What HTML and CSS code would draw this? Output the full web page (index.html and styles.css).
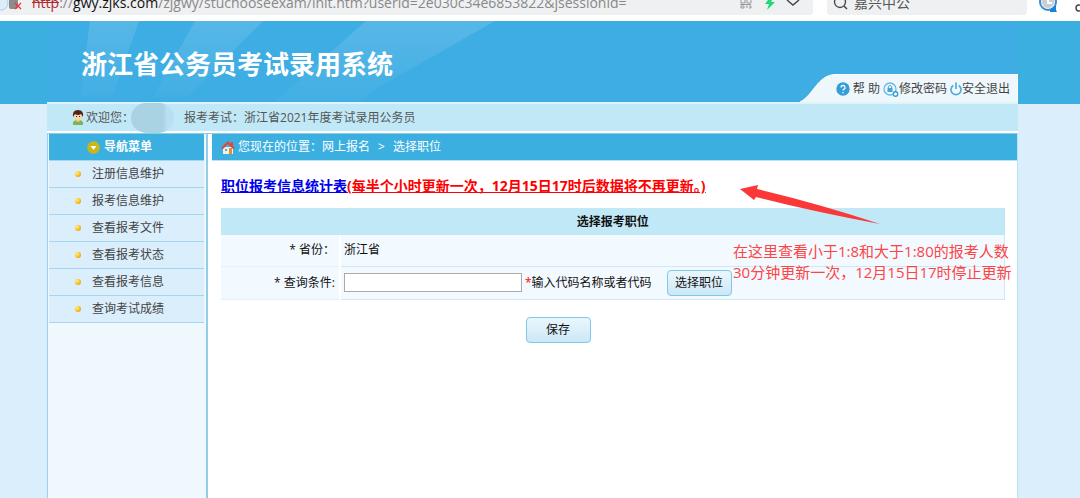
FILE: index.html
```
<!DOCTYPE html>
<html lang="zh-CN">
<head>
    <meta charset="UTF-8">
    <meta name="viewport" content="width=device-width, initial-scale=1.0">
    <title>浙江省公务员考试录用系统</title>
    <link rel="stylesheet" href="styles.css">
</head>
<body>
    <div class="browser-bar">
        <div class="address">
            <svg class="site-icon" width="24" height="24" viewBox="0 0 24 24">
                <circle cx="1" cy="12" r="7" fill="#dcecf8" stroke="#a9cdea"/>
                <rect x="9" y="8" width="9" height="10" rx="2" fill="#8b8b8b"/>
                <path d="M15 12l6 6M21 12l-6 6" stroke="#f0303c" stroke-width="1.3"/>
            </svg>
            <div class="url"><span class="scheme">http</span>://<span class="domain">gwy.zjks.com</span>/zjgwy/stuchooseexam/init.htm?userid=2e030c34e6853822&amp;jsessionid=</div>
            <svg class="address-icons" width="64" height="24" viewBox="0 0 64 24">
                <path d="M1 9v3h4V9M7 9v3h4V9M0 13.5h11M1 15h3v2H1zM6 15h1v2M9 15h2v2H9" fill="none" stroke="#999"/>
                <path d="M31 5l-6 8h4l-2 6 8-8h-4l3-6z" fill="#1fd873"/>
                <path d="M47 9l6 5 6-5" fill="none" stroke="#444" stroke-width="1.4"/>
            </svg>
        </div>
        <div class="search">
            <svg width="18" height="24" viewBox="0 0 18 24">
                <circle cx="8" cy="11" r="5.5" fill="none" stroke="#444" stroke-width="1.3"/>
                <path d="M12 15l3 3" stroke="#444" stroke-width="1.5"/>
            </svg>
            <input type="text" class="search-input" aria-label="搜索" value="嘉兴中公">
        </div>
        <svg class="bar-tools" width="42" height="24" viewBox="0 0 42 24">
            <circle cx="10" cy="11" r="8" fill="#eef3f7" stroke="#3f8bd3" stroke-width="2"/>
            <circle cx="10" cy="11" r="6" fill="#c9ced2"/>
            <path d="M10 7v5h4" fill="none" stroke="#fff" stroke-width="2"/>
            <path d="M12 18q4-1 6-4v5l1 2h-7z" fill="#1683dd"/>
            <circle cx="41" cy="17" r="3" fill="none" stroke="#444" stroke-width="1.4"/>
        </svg>
    </div>

    <header class="banner">
        <div class="banner-inner">
            <svg class="rays" width="450" height="82" viewBox="0 0 450 82">
                <defs>
                    <linearGradient id="ray" x1="0" y1="0" x2="0" y2="1">
                        <stop offset="0" stop-color="#fff" stop-opacity="0.13"/>
                        <stop offset="1" stop-color="#fff" stop-opacity="0.02"/>
                    </linearGradient>
                </defs>
                <path d="M43 0h49L65 76H33z" fill="url(#ray)"/>
                <path d="M148 0h68l-76 76h-34z" fill="url(#ray)"/>
                <path d="M319 0h129L332 66 312 82H226z" fill="url(#ray)"/>
            </svg>
            <h1>浙江省公务员考试录用系统</h1>
            <div class="tools">
                <svg class="tools-curve" width="36" height="28" viewBox="0 0 36 28">
                    <path d="M0 28C14 21 17 1 36 0v28z" fill="#eef7fc"/>
                    <path d="M0 28C14 21 17 1 36 .5" fill="none" stroke="#fff"/>
                </svg>
                <div class="tools-links">
                    <a href="#">
                        <svg width="14" height="14" viewBox="0 0 14 14">
                            <circle cx="7" cy="7" r="6.7" fill="#359fd5"/>
                            <path d="M5 5.5a2 2 0 1 1 2.8 1.8Q7 7.8 7 8.6M7 10v1.2" fill="none" stroke="#fff" stroke-width="1.3"/>
                        </svg>
                        <span>帮 助</span>
                    </a>
                    <a href="#">
                        <svg width="16" height="16" viewBox="0 0 16 16">
                            <circle cx="7" cy="8" r="6" fill="#e9f6fc" stroke="#6ab9df" stroke-width="1.3"/>
                            <path d="M5.3 7V5.5q1.7-2 3.4 0V7" fill="none" stroke="#46a5d6"/>
                            <rect x="4.5" y="7" width="5" height="4" fill="#46a5d6"/>
                            <circle cx="12.5" cy="13" r="2.2" fill="#fff" stroke="#359fd5" stroke-width="1.4"/>
                        </svg>
                        <span>修改密码</span>
                    </a>
                    <a href="#">
                        <svg width="12" height="14" viewBox="0 0 12 14">
                            <path d="M3.2 3.5a5 5 0 1 0 5.6 0M6 .5V7" fill="none" stroke="#52add9" stroke-width="1.7"/>
                        </svg>
                        <span>安全退出</span>
                    </a>
                </div>
            </div>
        </div>
    </header>

    <div class="page">
        <div class="welcome">
            <svg width="12" height="15" viewBox="0 0 12 15">
                <path d="M1 15q-1-5 5-5t5 5z" fill="#79b850"/>
                <path d="M4 9h4v2l-2 1-2-1z" fill="#f3c08e"/>
                <circle cx="6" cy="6" r="4" fill="#fbd3a8"/>
                <path d="M1 7Q0 0 6 0t5 7L9 4Q6 6 3 4z" fill="#4e2417"/>
                <path d="M4 6.5h1M7 6.5h1" stroke="#4e2417"/>
            </svg>
            <span>欢迎您：</span>
            <span class="user-mask"></span>
            <span>报考考试：浙江省2021年度考试录用公务员</span>
        </div>

        <div class="columns">
            <nav class="sidebar">
                <h2>
                    <svg width="13" height="13" viewBox="0 0 13 13">
                        <circle cx="6.5" cy="6.5" r="6.3" fill="#c9b719"/>
                        <path d="M3.5 5h6l-3 4z" fill="#fff"/>
                    </svg>
                    导航菜单
                </h2>
                <ul>
                    <li><a href="#">注册信息维护</a></li>
                    <li><a href="#">报考信息维护</a></li>
                    <li><a href="#">查看报考文件</a></li>
                    <li><a href="#">查看报考状态</a></li>
                    <li><a href="#">查看报考信息</a></li>
                    <li><a href="#">查询考试成绩</a></li>
                </ul>
            </nav>

            <main class="content">
                <div class="location">
                    <svg width="14" height="13" viewBox="0 0 14 13">
                        <path d="M2 6h10v7H2z" fill="#f6eee2"/>
                        <path d="M10 1h2v4h-2z" fill="#d9493c"/>
                        <path d="M0 7l7-7 7 7-2 1-5-5-5 5z" fill="#e2453b"/>
                        <path d="M8 7h3v6H8z" fill="#df922b"/>
                        <path d="M4 8h2v2H4z" fill="#5da5d8"/>
                    </svg>
                    <span>您现在的位置：网上报名</span>
                    <span>&gt;</span>
                    <span>选择职位</span>
                </div>

                <div class="panel">
                    <p class="notice"><a href="#">职位报考信息统计表<span>(每半个小时更新一次，12月15日17时后数据将不再更新。)</span></a></p>

                    <form>
                        <table class="form-table">
                            <thead>
                                <tr><th colspan="2">选择报考职位</th></tr>
                            </thead>
                            <tbody>
                                <tr>
                                    <td class="label">* 省份：</td>
                                    <td>浙江省</td>
                                </tr>
                                <tr>
                                    <td class="label"><label for="keyword">* 查询条件:</label></td>
                                    <td>
                                        <div class="query">
                                            <input type="text" id="keyword" class="keyword">
                                            <span class="hint"><span class="star">*</span>输入代码名称或者代码</span>
                                            <button type="button" class="btn">选择职位</button>
                                        </div>
                                    </td>
                                </tr>
                            </tbody>
                        </table>
                        <div class="actions">
                            <button type="button" class="btn">保存</button>
                        </div>
                    </form>
                </div>

                <svg class="arrow" width="142" height="44" viewBox="0 0 142 44">
                    <path d="M0 8L18 4l-1 4Q80 23 140 43 70 30 16 16l-2 3z" fill="#fb3838"/>
                </svg>
                <p class="remark">在这里查看小于1:8和大于1:80的报考人数<br>30分钟更新一次，12月15日17时停止更新</p>
            </main>
        </div>
    </div>
</body>
</html>
```
FILE: styles.css
```
* {
    box-sizing: border-box;
}

body {
    margin: 0;
    min-height: 100vh;
    display: flex;
    flex-direction: column;
    font-family: "Open Sans", "Noto Sans CJK SC", sans-serif;
    font-size: 12px;
    line-height: 18px;
    color: #222;
    background: #dbeefc;
}

h1, h2, p, ul {
    margin: 0;
    padding: 0;
}

a {
    color: inherit;
    text-decoration: none;
}

svg {
    flex: none;
}

/* browser toolbar */
.browser-bar {
    display: flex;
    height: 21px;
    padding-bottom: 6px;
    background: #fff;
}

.address, .search {
    display: flex;
    align-items: flex-end;
    background: #eff0f2;
    line-height: 24px;
    height: 15px;
}

.address {
    flex: 1;
    border-radius: 0 0 4px 0;
}

.url {
    flex: 1;
    margin-left: 8px;
    font-size: 14px;
    color: #888;
    white-space: nowrap;
}

.scheme {
    color: #b02a2a;
    text-decoration: line-through;
}

.domain {
    color: #111;
}

.address-icons {
    margin-right: 9px;
}

.search {
    width: 200px;
    margin-left: 14px;
    padding-left: 5px;
    border-radius: 0 0 4px 4px;
}

.search-input {
    flex: 1;
    min-width: 0;
    height: 24px;
    margin-left: 4px;
    padding: 0;
    border: none;
    background: none;
    font: 14px/24px "Open Sans", "Noto Sans CJK SC", sans-serif;
    color: #555;
}

.bar-tools {
    align-self: flex-end;
    margin-left: 11px;
}

/* banner */
.banner {
    height: 83px;
    padding: 0 62px 0 47px;
    background: #3cafe1;
}

.banner-inner {
    position: relative;
    display: flex;
    justify-content: space-between;
    height: 83px;
    background: #3eade3;
    border-bottom: 2px solid #dff3fb;
}

.rays {
    position: absolute;
    left: 0;
    top: 0;
}

.banner h1 {
    position: relative;
    padding: 24px 0 0 34px;
    font-size: 26px;
    line-height: 38px;
    color: #fff;
}

.tools {
    display: flex;
    align-self: flex-end;
    height: 28px;
}

.tools-links {
    display: flex;
    align-items: center;
    gap: 3px;
    padding-right: 7px;
    border-top: 1px solid #fff;
    border-right: 1px solid #fff;
    background: #eef7fc;
    color: #444;
}

.tools-links a {
    display: flex;
    align-items: center;
}

.tools-links a:first-child {
    gap: 3px;
}

/* page */
.page {
    flex: 1;
    display: flex;
    flex-direction: column;
    margin: 0 62px 0 47px;
}

.welcome {
    display: flex;
    align-items: center;
    height: 27px;
    padding-left: 25px;
    background: #c0e8f7;
    color: #555;
}

.welcome svg {
    margin-right: 2px;
}

.user-mask {
    position: relative;
    width: 43px;
    height: 30px;
    margin-right: 10px;
    margin-left: -3px;
    border-radius: 18px;
    background: linear-gradient(to right, #a9d2e2 32px, #b7e0f3 36px);
}

.columns {
    flex: 1;
    display: flex;
    border-top: 2px solid #fff;
}

.sidebar {
    width: 161px;
    padding: 0 2px 0 1px;
    border-top: 1px solid #8dcbe8;
    border-left: 1px solid #9bd2ef;
    border-right: 2px solid #94cdeb;
    background: #eff8fc;
}

.sidebar h2 {
    display: flex;
    align-items: center;
    justify-content: center;
    gap: 4px;
    height: 27px;
    padding-right: 14px;
    border-bottom: 1px solid #a5d6ef;
    background: #3cafe1;
    color: #fff;
    font-size: 12px;
}

.sidebar ul {
    list-style: none;
}

.sidebar li {
    display: flex;
    align-items: center;
    height: 27px;
    padding-left: 26px;
    border-bottom: 1px solid #a5d6ef;
    background: #dbeefc;
    color: #444;
}

.sidebar li::before {
    content: "";
    width: 6px;
    height: 6px;
    margin-right: 11px;
    border-radius: 50%;
    background: radial-gradient(circle at 2px 2px, #fff27a, #f6b51c 60%, #e28a12);
}

.content {
    position: relative;
    flex: 1;
    padding-left: 4px;
    border-top: 1px solid #8dcbe8;
    border-right: 1px solid #b9e2f3;
    background: #fff;
}

.location {
    display: flex;
    align-items: center;
    gap: 8px;
    height: 27px;
    padding-left: 9px;
    border-bottom: 1px solid #b9e2f3;
    background: #3cafe1;
    color: #fff;
}

.location svg {
    margin-right: -5px;
}

.panel {
    padding: 14px 12px 0 9px;
}

.notice {
    font-size: 14px;
    line-height: 22px;
    font-weight: bold;
}

.notice a {
    color: #0000ee;
    text-decoration: underline;
}

.notice span {
    color: #f00;
    text-decoration: underline;
}

.form-table {
    width: 100%;
    margin-top: 11px;
    border-collapse: collapse;
    background: #f2f9ff;
    color: #111;
}

.form-table th {
    height: 27px;
    padding: 0;
    background: #c0e8f7;
}

.form-table td {
    height: 31px;
    padding: 0 4px 0 3px;
    border-bottom: 1px solid #cfe8f5;
}

.form-table tbody {
    border-right: 1px solid #cfe8f5;
}

.form-table .label {
    width: 119px;
    text-align: right;
    border-right: 2px solid #fff;
    border-bottom-color: #e4f2fa;
}

.query {
    display: flex;
    align-items: center;
    height: 32px;
}

.keyword {
    width: 178px;
    height: 19px;
    padding: 0 2px;
    border: 1px solid #aaa;
    background: #fff;
}

.hint {
    margin: 0 15px 0 3px;
}

.star {
    color: #f00;
}

.btn {
    width: 65px;
    height: 26px;
    padding: 0;
    border: 1px solid #7fc8ea;
    border-radius: 4px;
    background: linear-gradient(#eaf6fd, #dceffa 50%, #cbe7f6);
    font: 12px/18px "Open Sans", "Noto Sans CJK SC", sans-serif;
    color: #111;
}

.actions {
    display: flex;
    justify-content: center;
    padding: 17px 110px 0 0;
}

/* marked-up remark over the form */
.arrow {
    position: absolute;
    left: 532px;
    top: 47px;
}

.remark {
    position: absolute;
    left: 525px;
    top: 107px;
    font-size: 15px;
    line-height: 21px;
    color: #f44;
    white-space: nowrap;
}
```
